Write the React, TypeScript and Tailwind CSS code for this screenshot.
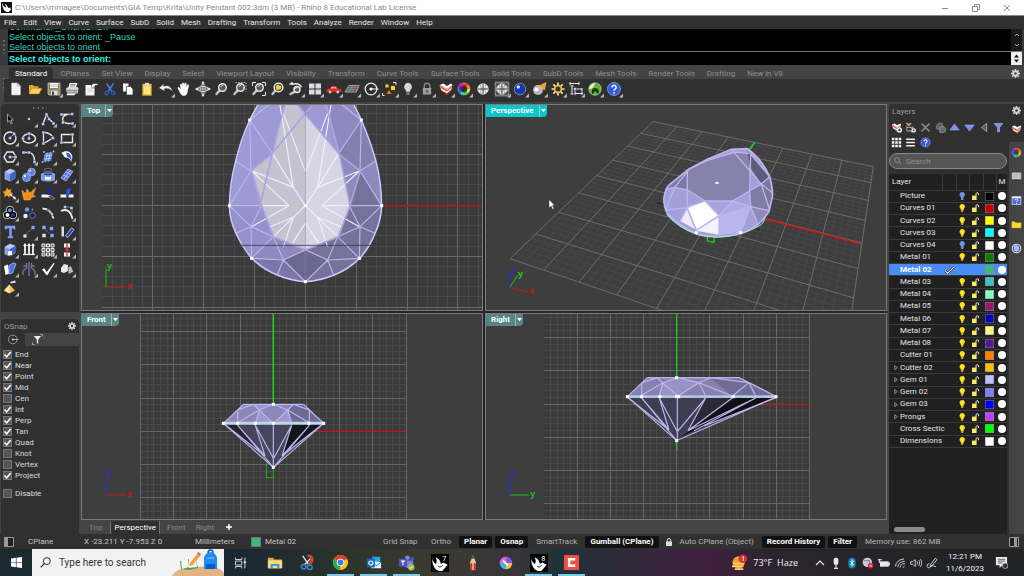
import React from "react";
import type { ReactNode } from "react";

type P = [number, number];

/* ---------- icon frame ---------- */

function Icon({ children, more = false, className = "size-[18px]" }: { children: ReactNode; more?: boolean; className?: string }) {
  return (
    <svg viewBox="0 0 18 18" className={`${className} block shrink-0`} fill="none" aria-hidden="true">
      {children}
      {more && <path d="M18 13.500v4h-4z" fill="#b4b4b4" />}
    </svg>
  );
}

const blue = "#7d9bf2";
const pale = "#ececec";

function Dot({ x, y, c = "#b9c8ff", r = 1.5 }: { x: number; y: number; c?: string; r?: number }) {
  return <rect x={x - r} y={y - r} width={r * 2} height={r * 2} fill={c} stroke="#222" strokeWidth=".4" />;
}

function Ball({ x, y, r, c }: { x: number; y: number; r: number; c: string }) {
  return (
    <>
      <circle cx={x} cy={y} r={r} fill={c} stroke="#d8d8d8" strokeWidth=".5" />
      <circle cx={x - r * 0.3} cy={y - r * 0.35} r={r * 0.3} fill="#fff" opacity=".85" />
    </>
  );
}

function Lens({ x = 9.5, y = 7.5, r = 3.8 }: { x?: number; y?: number; r?: number }) {
  return (
    <>
      <path d={`M${x - r * 0.7} ${y + r * 0.7}L3.5 14`} stroke="#c4c4c4" strokeWidth="2.4" strokeLinecap="round" />
      <circle cx={x} cy={y} r={r} fill="#5a5a5a" stroke={pale} strokeWidth="1.4" />
      <path d={`M${x - 1.6} ${y - 0.6}a2 2 0 0 1 2-1.4`} stroke="#fff" strokeWidth=".8" />
    </>
  );
}

function Wheel() {
  const colors = ["#f22", "#f80", "#fe0", "#3d2", "#0dc", "#16f", "#80f", "#f0a"];
  return (
    <>
      {colors.map((c, i) => {
        const a = (i * Math.PI) / 4 - Math.PI / 2;
        const b = a + Math.PI / 4 + 0.03;
        const r = 4.6;
        return (
          <path
            key={c}
            d={`M${9 + r * Math.cos(a)} ${9 + r * Math.sin(a)}A${r} ${r} 0 0 1 ${9 + r * Math.cos(b)} ${9 + r * Math.sin(b)}`}
            stroke={c}
            strokeWidth="2.6"
          />
        );
      })}
      <circle cx="9" cy="9" r="6" stroke="#ddd" strokeWidth=".5" />
    </>
  );
}

function LayerGlyph() {
  return (
    <>
      <path d="M2.500 5l4-1.500L10 6l4-2.500L15.500 5 10 9z" fill="#fff" />
      <path d="M2.500 5.500l2 5L10 14.500l4-4L15.500 5 10 9z" fill="#f4f4f4" />
      <path d="M2.700 5.500L10 9.700 15.300 5.500l-.6 2L10 11.500 3.700 8z" fill="#e8562f" />
      <path d="M4.500 10.300L10 13.200l4-3.700-.5 1.800L10 15l-5-3.500z" fill="#c9281a" />
    </>
  );
}

function Globe({ a = "#fff", b = "#b9b9b9" }: { a?: string; b?: string }) {
  return (
    <>
      <circle cx="9" cy="9" r="5.4" fill={a} stroke="#ddd" strokeWidth=".5" />
      <path d="M9 3.800v10.400M3.800 9h10.400" stroke={b} strokeWidth="1" />
      <path d="M6.200 4.500c1.200 2.500 1.200 6.500 0 9M11.800 4.500c-1.200 2.500-1.200 6.500 0 9" stroke={b} strokeWidth=".4" />
    </>
  );
}

function Help() {
  return (
    <>
      <circle cx="9" cy="9" r="6.400" fill="#3057dd" stroke="#9db2f5" strokeWidth=".8" />
      <path d="M6.900 7.400a2.100 2.100 0 1 1 3.200 1.800c-.8.5-1.100.8-1.100 1.600" stroke="#fff" strokeWidth="1.500" />
      <circle cx="9" cy="12.800" r=".9" fill="#fff" />
    </>
  );
}

function Gear({ className = "size-2" }: { className?: string }) {
  return (
    <svg viewBox="0 0 16 16" className={`${className} block shrink-0`} aria-hidden="true">
      <circle cx="8" cy="8" r="4" fill="none" stroke="#d4d4d4" strokeWidth="3.4" />
      <path d="M8 0v4M8 12v4M0 8h4M12 8h4M2.300 2.300l3 3M10.700 10.700l3 3M13.700 2.300l-3 3M5.300 10.700l-3 3" stroke="#d4d4d4" strokeWidth="2.6" />
    </svg>
  );
}

const sheet = <path d="M4.500 3h6l3 3v9h-9z" fill="#f4f4f4" stroke="#bbb" strokeWidth=".5" />;

/* ---------- toolbar across the top ---------- */

type Tool = { name: string; more?: boolean; art: ReactNode };

const mainTools: Tool[] = [
  { name: "New", art: <>{sheet}<path d="M10.500 3v3h3" fill="#cfcfcf" stroke="#999" strokeWidth=".5" /></> },
  { name: "Open", art: <><path d="M3 13.500V5h4l1 1.300h4.500V8" fill="#e8a520" /><path d="M3 14l2.500-5.800H16L13 14z" fill="#ffd25a" stroke="#a8720b" strokeWidth=".5" /></> },
  { name: "Save", more: true, art: <><path d="M3 3h12v12H4l-1-1z" fill="#8d8865" stroke="#d8d5b8" strokeWidth=".7" /><path d="M5 3h8v5H5z" fill="#fff" /><path d="M5 4.800h8M5 6.400h8" stroke="#888" strokeWidth=".5" /><path d="M6 10.500h6.500V15H6z" fill="#ddd" /><path d="M7 11.500h2V15H7z" fill="#444" /></> },
  { name: "Print", art: <><path d="M6.500 3h8l-2 5h-7z" fill="#fafafa" /><path d="M3 8.500l2-1.500h9.500l1 1.500-1 5H4z" fill="#d9d9d9" /><path d="M3.500 10.300h11M4 12.200h10M7.500 4.500h5M7 6h5" stroke="#555" strokeWidth=".7" /><path d="M4.500 13.500h8l-1 1.800h-8z" fill="#fff" /></> },
  { name: "Properties", art: <><path d="M3.500 5h9v10.500h-9z" fill="#f4f4f4" /><path d="M9 6l2-2.500h5V5l-3 .5-2 3z" fill="#fff" stroke="#333" strokeWidth=".6" /><path d="M5.500 9h5M5.500 11h5" stroke="#aaa" strokeWidth=".6" /></> },
  { name: "Cut", art: <><path d="M5.500 3.500L11 11.500M12.500 3.500L7 11.500" stroke="#4a7ce0" strokeWidth="1.4" /><circle cx="5.800" cy="13" r="1.700" stroke="#2c5ec0" strokeWidth="1.3" /><circle cx="12.200" cy="13" r="1.700" stroke="#2c5ec0" strokeWidth="1.3" /></> },
  { name: "Copy", art: <><path d="M4 3.500h5.500v8H4z" fill="#f4f4f4" /><path d="M7.500 6.500h4l2.500 2.500v6H7.500z" fill="#fff" stroke="#333" strokeWidth=".7" /></> },
  { name: "Paste", art: <><path d="M4.500 4h9v11.500h-9z" fill="#f2c94c" stroke="#b48a1e" strokeWidth=".5" /><path d="M6 6.500h6V14H6z" fill="#ffe38a" /><path d="M7 2.800h4v2.400H7z" fill="#ddd" /></> },
  { name: "Undo", more: true, art: <path d="M2 8l4.500-4v2.300c4-1.600 7.500-.3 9.500 5.200-3-3.200-6-3.700-9-2.500l1 2.200z" fill="#f2f2f2" stroke="#222" strokeWidth=".3" /> },
  { name: "Pan", art: <path d="M4.500 11L3 8.500c-.6-1 .5-1.500 1.200-.8L6 9.500 5.400 5c0-1.200 1.300-1.200 1.500 0L7.500 8V3.800c0-1.200 1.500-1.200 1.500 0V8l.7-4.200c.3-1 1.600-.9 1.500.2L10.900 8l1.300-2.800c.5-1 1.700-.6 1.400.5L12.400 11c-.3 3-1.200 4.500-3.500 4.500-2.400 0-3.400-1.800-4.400-4.500z" fill="#fff" stroke="#fff" strokeWidth=".6" /> },
  { name: "Rotate view", art: <><path d="M9 2.500v13M2 9h14" stroke={pale} strokeWidth=".8" /><ellipse cx="9" cy="9" rx="5.500" ry="2.400" stroke={pale} /><ellipse cx="9" cy="9" rx="2.300" ry="5" stroke="#bbb" /><path d="M9 1l1.800 2.600H7.200zM9 17l1.800-2.600H7.200zM1 9l2.600-1.800v3.600zM17 9l-2.600-1.800v3.600z" fill={pale} /></> },
  { name: "Zoom dynamic", art: <Lens /> },
  { name: "Zoom window", art: <><path d="M4.500 2.500h10.500v9" stroke="#bbb" strokeDasharray="1.500 1.200" /><Lens /></> },
  { name: "Zoom extents", art: <><Lens /><path d="M2.500 6V2.500H6M12 2.500h3.500V6M15.500 12v3.500H12" stroke={pale} /></> },
  { name: "Zoom selected", art: <><Lens r={4.4} /><path d="M9.500 5a2.600 2.600 0 1 0 0 5.200z" fill="#f7d619" /><circle cx="10.500" cy="7.600" r="1.800" fill="#f7d619" /></> },
  { name: "Undo view", more: true, art: <><path d="M2.500 4.500L5 2.800v1.500c4-1 8-.5 9.500 3" stroke={pale} strokeWidth="1.4" /><Lens x={10} y={9.5} r={3} /></> },
  { name: "Viewports", more: true, art: <path d="M3 3.500h5.500v5H3zM9.500 3.500H15v5H9.500zM3 9.500h5.500v5H3zM9.500 9.500H15v5H9.500z" fill="#d9dde3" /> },
  { name: "Car view", more: true, art: <><path d="M1.500 12V9.500l3-1L6.500 6h4.500l2 2.500 3.300.7V12z" fill="#e32626" /><path d="M6.800 7h2v1.600H5.800zM9.600 7h1l1.300 1.600H9.600z" fill="#fbb" /><circle cx="5" cy="12" r="1.400" fill="#ccc" /><circle cx="12.700" cy="12" r="1.400" fill="#ccc" /></> },
  { name: "CPlane", more: true, art: <><path d="M2 12l4-6.500h10L13.500 12z" fill="#565656" stroke="#bbb" strokeWidth=".8" /><path d="M3.500 9.800h11M4.800 7.700h10.600M6 12l3.500-6.500M9.500 12l3-6.500" stroke="#aaa" strokeWidth=".6" /><path d="M9 9l4-1" stroke="#e22" /><path d="M9 9V6" stroke="#2c4" /></> },
  { name: "Object snap", more: true, art: <><circle cx="9" cy="9" r="5.800" stroke={pale} strokeWidth="1.3" /><circle cx="9" cy="9" r="1.600" fill="#fff" /><path d="M9 9h7.500" stroke={pale} /></> },
  { name: "Select", more: true, art: <><path d="M12 2.500h3V5M3.500 15.500H1.500V13" stroke={pale} /><path d="M4.500 4.500h3v3h-3zM10 6h4v4h-4z" fill="#ffd60a" /><path d="M8 10l2.500 4h-5z" fill="#f08a24" stroke="#7a3c08" strokeWidth=".4" /></> },
  { name: "Visibility", more: true, art: <><path d="M9 2.800a4 4 0 0 1 2.500 7l-.7 2H7.200l-.7-2A4 4 0 0 1 9 2.800z" fill="#d5d5d5" /><path d="M7.500 12.400h3v2.400h-3z" fill="#8d8d8d" /><path d="M7.500 5.200a2 2 0 0 1 1.500-1" stroke="#fff" /></> },
  { name: "Lock", more: true, art: <><path d="M6.200 8V6a2.800 2.800 0 0 1 5.600 0v2" stroke="#888" strokeWidth="1.4" /><path d="M4.800 8h8.400v6.500H4.800z" fill="#9d9d9d" /><path d="M9 10v2.500" stroke="#333" strokeWidth="1.2" /></> },
  { name: "Layers", more: true, art: <LayerGlyph /> },
  { name: "Object properties", more: true, art: <Wheel /> },
  { name: "Shade", art: <Globe a="#f1f1f1" b="#3a3a3a" /> },
  { name: "Render preview", more: true, art: <><path d="M2.500 2.500h13v13h-13z" stroke="#ccc" strokeWidth="1.800" strokeDasharray="1 1" /><Globe a="#e4e4e4" b="#3a3a3a" /></> },
  { name: "Render", more: true, art: <Ball x={9} y={9} r={5.8} c="#1336b8" /> },
  { name: "Lights", more: true, art: <><circle cx="8" cy="10" r="5" fill="#b9b9b9" /><path d="M9 6L16 2.500l-1.500 7.500z" fill="#f39a2b" stroke="#ffd27a" strokeWidth=".5" /><circle cx="6.500" cy="9.500" r="2" fill="#fff" /></> },
  { name: "Options", more: true, art: <><circle cx="9" cy="9" r="3.400" stroke="#f5b93a" strokeWidth="1.800" /><path d="M9 2.500v2.400M9 13.100v2.400M2.500 9h2.400M13.100 9h2.400M4.400 4.400l1.700 1.700M11.900 11.900l1.700 1.700M13.600 4.400l-1.700 1.700M6.100 11.900l-1.700 1.700" stroke="#ffe7a3" strokeWidth="1.700" /></> },
  { name: "Dimension", more: true, art: <><path d="M3 3.500h9M3 2v3M12 2v3M5 6v8M3.500 6h3M3.500 14h3M8 9h7M8 13.500h8M8 8v7M15 8v7" stroke={pale} /><Dot x={8} y={9} /></> },
  { name: "Grasshopper", more: true, art: <><circle cx="9" cy="9" r="6.200" fill="#63b52f" stroke="#ddd" strokeWidth=".6" /><path d="M9 2.900A6 6 0 0 0 3.200 9c3 0 5-2 5.800-6.100z" fill="#dff0d0" /><path d="M9 8c-3 0-4 3-2.500 6.500L9 11l3 3c2-3 0-6-3-6z" fill="#17380a" /></> },
  { name: "Help", more: true, art: <Help /> },
];

/* ---------- palette on the left ---------- */

const cube = (
  <>
    <path d="M4 6l5-3 5 2v7l-5 3-5-2z" fill={blue} stroke="#dfe6ff" strokeWidth=".5" />
    <path d="M9 8l5-3v7l-5 3z" fill="#3c61d6" />
    <path d="M4 6l5-3 5 2-5 3z" fill="#b9c9ff" />
  </>
);

const sideTools: Tool[] = [
  { name: "Pointer", art: <path d="M6.500 4v8l2-1.500 1.500 3.500 1.300-.6L9.800 10h2.500z" fill="#0a0a0a" stroke="#ccc" strokeWidth=".7" /> },
  { name: "Point", more: true, art: <Dot x={9} y={9} r={1.2} /> },
  { name: "Polyline", more: true, art: <><path d="M4 14L7.500 4.500 10 9l5 4.500" stroke={pale} strokeWidth="1.4" /><Dot x={4} y={14} /><Dot x={7.5} y={4.5} /><Dot x={10} y={9} /><Dot x={14.5} y={13.5} /></> },
  { name: "Curve", more: true, art: <><path d="M3.500 4.500h6c-6 1-7 8 0 9h5" stroke={pale} strokeWidth="1.4" /><path d="M3.500 4.500l11-.5" stroke={pale} /><Dot x={3.5} y={4.5} /><Dot x={14} y={4} /><Dot x={5} y={12.5} /><Dot x={14.5} y={13.5} /></> },
  { name: "Circle", more: true, art: <><circle cx="9" cy="9" r="6" stroke={pale} strokeWidth="1.4" /><path d="M9 9l4.300-4.300" stroke={pale} strokeWidth=".8" /><Dot x={9} y={9} /><Dot x={13.3} y={4.7} /></> },
  { name: "Ellipse", more: true, art: <><ellipse cx="9" cy="9.500" rx="6.500" ry="4.500" stroke={pale} strokeWidth="1.4" /><path d="M9 9.500V5" stroke="#aaa" /><Dot x={9} y={9.5} /><Dot x={9} y={4.5} /><Dot x={3} y={9.5} /></> },
  { name: "Arc", more: true, art: <><path d="M4.500 3.500v11L14 9M4.500 3.500c5 0 8 2 9.500 5.500" stroke={pale} strokeWidth="1.3" /><Dot x={4.5} y={3.5} /><Dot x={4.5} y={14.5} /><Dot x={14} y={9} /></> },
  { name: "Rectangle", more: true, art: <><path d="M3.500 5.500h11v8h-11z" stroke={pale} strokeWidth="1.4" /><Dot x={3.5} y={13.5} /><Dot x={14.5} y={5.5} /></> },
  { name: "Polygon", more: true, art: <><path d="M6 4h6l3 5-3 5H6L3 9z" stroke={pale} strokeWidth="1.4" /><path d="M9 9h6" stroke={pale} /><Dot x={9} y={9} /><Dot x={14.5} y={9} /></> },
  { name: "Fillet curves", more: true, art: <><path d="M3 4.500h5c5 0 6.500 3 6.500 9.500" stroke={pale} strokeWidth="1.5" /><Dot x={3.5} y={4.5} /><Dot x={9} y={4.5} /><Dot x={14.5} y={14} /></> },
  { name: "Surface from points", more: true, art: <><path d="M6 5l8-1-2 9-8 1z" fill="#5d80e8" /><path d="M5.300 8l8-.8M4.700 11l8-.8M8.500 4.800l-2 9M11.300 4.400l-2 9" stroke="#cfdcff" strokeWidth=".7" /><Dot x={5} y={4} c="#ddd" r={1} /><Dot x={14.5} y={3.5} c="#ddd" r={1} /><Dot x={3.5} y={14} c="#ddd" r={1} /></> },
  { name: "Sweep", more: true, art: <><path d="M3.500 5c4-3.500 10-2 11 4l-1.500 5c-1-4-3.500-5-6-4.500z" fill="#fff" /><path d="M8 4.500c4 0 6.500 3 5 9-.5-3-2-4.500-4-4.500z" fill="#4166da" /></> },
  { name: "Box", more: true, art: cube },
  { name: "Spheres", more: true, art: <><circle cx="11.500" cy="6" r="3.800" fill="#5d80e8" stroke="#cfdcff" strokeWidth=".6" /><circle cx="6.500" cy="11.500" r="4" fill="#5d80e8" stroke="#cfdcff" strokeWidth=".6" /><circle cx="5" cy="10" r="1.200" fill="#dfe7ff" /><circle cx="10.300" cy="4.700" r="1" fill="#dfe7ff" /></> },
  { name: "Boolean", more: true, art: <><ellipse cx="9" cy="4" rx="4" ry="1.700" stroke="#777" strokeWidth=".8" /><path d="M2.500 8v6c3 1.500 10 1.500 13 0V8c-2-1.500-11-1.500-13 0z" fill={blue} stroke="#dfe6ff" strokeWidth=".5" /><path d="M6 10.500c1.500 1 4.500 1 6 0v3H6z" fill="#fff" /><ellipse cx="9" cy="8.300" rx="4" ry="1" fill="#29469f" /></> },
  { name: "Mesh", more: true, art: <><path d="M3 12l7-9 5 2.500-7 9.500z" fill="#4f75e6" stroke="#dfe6ff" strokeWidth=".6" /><path d="M5.500 13.500l7-9.300M5.500 9l5 2.500M8 6l5 2.500" stroke="#bccbff" strokeWidth=".8" /></> },
  { name: "Explode", more: true, art: <><path d="M6 2.500l1.500 2.500 3-1-.8 3 2.300 1.700-3 1-.5 3-2.300-2.200L3 12l.8-3.200-2.300-2 3-.8z" fill="#f6a524" /><path d="M8.500 8.500h2.300l.7 2.500 2.500.5 1.500 3-3-.5-1-2.500-2.500-.5z" fill="#fff" stroke="#555" strokeWidth=".4" /></> },
  { name: "Join", art: <path d="M2 5.500L6 8.500 7 4l3 4 5.500-5L13 10l2.500 1.500-4 1L10 15H4l-1-4z" fill="#f58b1f" stroke="#ffb04f" strokeWidth=".5" /> },
  { name: "Trim", art: <><path d="M2.500 9.500h8v3h-8z" fill="#f2f2f2" /><path d="M8.500 3l5-1-2 8h-3z" fill="#182e80" /><path d="M10.500 10l5 3-2 2-4-3.500z" stroke="#aaa" strokeWidth=".8" /></> },
  { name: "Split", art: <><path d="M2.500 9.500h6v3h-6zM10.500 9.500h5v3h-5z" fill="#f2f2f2" /><path d="M8.500 4l4.500-1-2 8h-3z" fill="#2a55d8" /></> },
  { name: "Group", more: true, art: <><circle cx="9" cy="6" r="3.900" fill="#e8e8e8" /><circle cx="6" cy="11" r="3.900" fill="#e8e8e8" /><circle cx="12" cy="11" r="3.900" fill="#e8e8e8" /><circle cx="9" cy="6" r="3.200" fill="#050505" /><circle cx="6" cy="11" r="3.200" fill="#050505" /><circle cx="12" cy="11" r="3.200" fill="#050505" /><circle cx="9" cy="6.300" r="2" fill="#6f90ee" /><circle cx="6.500" cy="11" r="2" fill="#fff" /><circle cx="11.800" cy="11" r="2" fill="#25368f" /></> },
  { name: "Ungroup", art: <><circle cx="7" cy="5.500" r="2.200" fill="#6f90ee" /><circle cx="5.500" cy="12" r="2.200" fill="#eee" /><circle cx="12.500" cy="11.500" r="2.800" fill="#0e1c77" stroke="#ccc" strokeWidth=".5" /><circle cx="12.500" cy="5.500" r="1" fill="#888" /></> },
  { name: "Edit points", art: <><path d="M3.500 4.500c6 0 9 3 11 10" stroke={pale} strokeWidth="1.8" /><Dot x={9.5} y={6.5} r={1.2} /><Dot x={13} y={10} r={1.2} /></> },
  { name: "Control points", more: true, art: <><path d="M3 7c6-3 10 1 11.500 8" stroke={pale} strokeWidth="1.800" /><path d="M7 3h7v6" stroke="#999" strokeWidth=".8" /><Dot x={7} y={3} /><Dot x={13.5} y={4} /></> },
  { name: "Text", art: <path d="M4 3h10v3.200h-1.200L12 5h-1.500v8.500H12V15H7v-1.500h1.500V5H6L5.200 6.200H4z" fill={blue} stroke={blue} strokeWidth=".6" /> },
  { name: "Move", more: true, art: <><path d="M5 12.500L12.500 5" stroke="#aaa" strokeDasharray="1.500 1" /><Dot x={13} y={4.5} r={1.9} c="#8aa4f4" /><Dot x={5} y={13} r={1.9} c="#ddd" /></> },
  { name: "Copy objects", art: <><path d="M5 5l8 8" stroke="#888" strokeDasharray="1.500 1" /><Dot x={5} y={4.5} r={2} c="#8aa4f4" /><Dot x={12.5} y={5.5} r={2} c="#8aa4f4" /><Dot x={13} y={12.5} r={2} c="#8aa4f4" /><Dot x={5} y={12.5} r={2} c="#ddd" /></> },
  { name: "Rotate", more: true, art: <><path d="M3.500 3.500H6v10H3.500z" fill="#ddd" /><path d="M7.500 13l6-8 2.500 1.500-6 8z" fill="#26449f" stroke="#9fb4f5" strokeWidth="1" /></> },
  { name: "Solid edit", more: true, art: <>{cube}<path d="M7 10h4v4H7z" fill="#fff" /></> },
  { name: "Align", more: true, art: <><path d="M3 13.500h12" stroke={pale} strokeWidth="1.300" /><path d="M5 4v9M9 4v9M13 4v9" stroke="#fff" strokeWidth="1.700" /><path d="M5 2l2 3H3zM9 2l2 3H7zM13 2l2 3h-4z" fill="#fff" /></> },
  { name: "Array", more: true, art: <path d="M3 3h3v3H3zM7.500 3h3v3h-3zM12 3h3v3h-3zM3 7.500h3v3H3zM7.500 7.500h3v3h-3zM12 7.500h3v3h-3zM3 12h3v3H3zM7.500 12h3v3h-3zM12 12h3v3h-3z" fill="#5e5e68" stroke="#f0f0f0" /> },
  { name: "Dimension", more: true, art: <><path d="M6 2.500h6v4H6zM6 11.500h6v4H6z" fill="#f2f2f2" /><path d="M9 3v12" stroke="#e03030" strokeWidth="1.400" /><path d="M7 8h4l-1.200 2H8.200z" fill="#e03030" /></> },
  { name: "Surfaces", more: true, art: <><path d="M3 6l4-1.500 1 9-3.500 1.500z" fill="#fff" /><path d="M8 5.500L12 3l3 1-3.500 9L8 14z" fill="#4870e4" stroke="#cfdcff" strokeWidth=".6" /></> },
  { name: "Mirror", more: true, art: <><path d="M9 2v14" stroke="#5d80e8" strokeWidth="1.300" /><path d="M6.500 3v5L3 11v4M11.500 3v5l3.500 3v4M7 6H3.500M11 6h3.500" stroke="#7d7d7d" strokeWidth="1.300" /></> },
  { name: "Check", more: true, art: <path d="M3 9.500l2.200-1.200L7.800 12 14.500 3l1 .6L8.500 15h-1z" fill="#fff" /> },
  { name: "Solids", more: true, art: <><path d="M3 8l3-4 4 1v6l-4 2-3-1z" fill="#e9e9e9" /><path d="M10 7l3-1 2.500 6-5 2z" fill="#bdbdbd" stroke="#444" strokeWidth=".5" /></> },
  { name: "Render tools", more: true, art: <><path d="M9 3l5-1.500 1 2-5 1z" fill="#ddd" /><path d="M8.500 5.500L14 11.500l-5.500 3-5.500-3z" fill="#f5c451" stroke="#8a5d10" strokeWidth=".5" /><path d="M8.500 5.500v9L3 11.500z" fill="#ffe7a1" /></> },
];

/* ---------- viewport drawings ---------- */

function range(from: number, to: number, step: number, anchor: number) {
  const out: number[] = [];
  const start = anchor + Math.ceil((from - anchor) / step) * step;
  for (let v = start; v <= to + 0.5; v += step) out.push(v);
  return out;
}

function FlatGrid({ x0, x1, y0, y1, ax, ay, pitch }: { x0: number; x1: number; y0: number; y1: number; ax: number; ay: number; pitch: number }) {
  const lines = (step: number) =>
    range(x0, x1, step, ax).map((x) => `M${x} ${y0}V${y1}`).join("") + range(y0, y1, step, ay).map((y) => `M${x0} ${y}H${x1}`).join("");
  return (
    <g strokeWidth="3" shapeRendering="crispEdges">
      <rect x={x0} y={y0} width={x1 - x0} height={y1 - y0} fill="#3b3b3b" />
      <path d={lines(pitch / 5)} stroke="#494949" />
      <path d={lines(pitch)} stroke="#676767" />
    </g>
  );
}

function AxisMark({ x, y, up, upColor, side, sideColor }: { x: number; y: number; up: string; upColor: string; side: string; sideColor: string }) {
  return (
    <g strokeWidth="3" className="font-['Open_Sans',sans-serif] text-[27px] font-bold">
      <path d={`M${x} ${y}v-58`} stroke={upColor} />
      <path d={`M${x} ${y}h58`} stroke={sideColor} />
      <text x={x + 3} y={y - 56} fill={upColor}>{up}</text>
      <text x={x + 62} y={y + 5} fill={sideColor}>{side}</text>
    </g>
  );
}

function Nodes({ at }: { at: P[] }) {
  return <>{at.map(([x, y]) => <rect key={`${x},${y}`} x={x - 4.5} y={y - 4.5} width="9" height="9" fill="#fff" />)}</>;
}

const edge = "#bcb6ee";

function TopScene() {
  const pear = "M150 -20Q127 15 104 60Q75 125 62 184Q45 245 43 317Q44 360 63 400Q82 442 110 475Q145 510 187 525Q228 543 271 545Q315 543 357 525Q400 510 434 475Q465 442 480 400Q499 360 500 317Q499 245 483 184Q467 125 439 60Q420 15 395 -20Z";
  const half = "M104 60L108 213M104 60L205 -20M104 60L172 160M108 213L62 184M108 213L43 317M43 317H140M43 317L108 380M108 380L63 400M108 380L110 475M108 380L140 317M110 475L175 410M110 475L205 480M205 480L175 410M205 480L187 525M205 480L271 545M205 480L271 450M108 380L175 410";
  const star = "M172 160L235 262M110 213L235 262L271 317M195 15L235 262M205 40L271 215M110 213L222 317M140 317H222M222 317L110 380M235 352L165 380M235 352L175 410M235 352L205 440M271 370L232 430M271 317L235 352";
  return (
    <>
      <FlatGrid x0={-339} x1={810} y0={0} y1={650} ax={271} ay={316} pitch={152.6} />
      <path d="M500 317H810" stroke="#a51d22" strokeWidth="5" />
      <path d={pear} fill="#8e8abf" />
      <path d="M150-20L104 60 62 184 43 317 140 317 172 160 213-20z" fill="#a19ddc" opacity=".8" />
      <path d="M43 317L63 400 110 475 175 410 140 317z" fill="#9591cc" />
      <path d="M500 317L480 400 434 475 370 410 405 317 436 213z" fill="#76739b" />
      <path d="M271 545L357 525 434 475 370 410 271 450z" fill="#76739b" />
      <path d="M271 545L205 480 271 450 340 480z" fill="#6b6991" />
      <path d="M271 545L187 525 110 475 205 480z" fill="#7a77a8" />
      <path d="M436 213L483 184 439 60 373 163z" fill="#8280ac" />
      <path d="M213 0L172 160 110 213 140 317 175 410 271 450 370 410 405 317 373 163 271 45 235 0z" fill="#c5c3d0" />
      <path d="M271 45L373 163 405 317 370 410 271 450z" fill="#d7d5e4" />
      <path d="M271 45L373 163 330 0 300 0z" fill="#9d99d4" />
      <g fill="none" strokeLinejoin="round">
        <g stroke="#f1effc" strokeWidth="3.5">
          <path d={star} />
          <path d={star} transform="translate(543 0) scale(-1 1)" />
        </g>
        <g stroke={edge} strokeWidth="3.5">
          <path d={half} />
          <path d={half} transform="translate(543 0) scale(-1 1)" />
          <path d="M300 5L172 160 108 213M240 5L373 163 436 213M140 317L175 410 271 450 370 410 405 317M172 160L135 317M373 163L405 317M213 0L172 160M330 0L373 163M110 213L140 317M436 213L405 317" stroke="#aaa5df" strokeWidth="5" />
          <path d={pear} stroke="#cdc9fa" strokeWidth="4.500" />
        </g>
        <path d="M43 436H498" stroke="#3b3b4a" strokeWidth="2.500" />
        <path d="M271 15V545" stroke="#8a87a4" strokeWidth="1.500" />
        <path d="M240 317H262" stroke="#8fdc8f" strokeWidth="3" />
      </g>
      <Nodes at={[[104, 60], [439, 60], [43, 317], [500, 317], [110, 475], [434, 475], [271, 545], [271, 317]]} />
      <AxisMark x={-327} y={562} up="y" upColor="#1fb51f" side="x" sideColor="#c01818" />
    </>
  );
}

/* Perspective mapping from the unit square to the ground plane's four corners. */
const ground = ((p0: P, p1: P, p2: P, p3: P) => {
  const sx = p0[0] - p1[0] + p2[0] - p3[0];
  const sy = p0[1] - p1[1] + p2[1] - p3[1];
  const dx1 = p1[0] - p2[0];
  const dy1 = p1[1] - p2[1];
  const dx2 = p3[0] - p2[0];
  const dy2 = p3[1] - p2[1];
  const den = dx1 * dy2 - dx2 * dy1;
  const g = (sx * dy2 - dx2 * sy) / den;
  const h = (dx1 * sy - sx * dy1) / den;
  return (u: number, v: number) => {
    const w = g * u + h * v + 1;
    const x = ((p1[0] - p0[0] + g * p1[0]) * u + (p3[0] - p0[0] + h * p3[0]) * v + p0[0]) / w;
    const y = ((p1[1] - p0[1] + g * p1[1]) * u + (p3[1] - p0[1] + h * p3[1]) * v + p0[1]) / w;
    return `${x.toFixed(1)} ${y.toFixed(1)}`;
  };
})([507, 65], [1168, 200], [1076, 815], [78, 476]);

function groundLines(count: number) {
  let d = "";
  for (let i = 0; i <= count; i++) {
    const t = i / count;
    d += `M${ground(t, 0)}L${ground(t, 1)}M${ground(0, t)}L${ground(1, t)}`;
  }
  return d;
}

function PerspectiveScene() {
  const outline = "M742 148L790 146Q835 178 857 230Q868 270 865 290L855 335Q840 358 820 375Q798 392 770 400Q735 410 700 410Q668 408 640 402Q612 392 590 375Q565 358 550 340Q538 318 540 292Q544 265 555 255L613 208 670 178Z";
  return (
    <>
      <path d={groundLines(40)} stroke="#4c4c4c" strokeWidth="2" />
      <path d={groundLines(8)} stroke="#737373" strokeWidth="2.500" />
      <path d="M795 150L812 127" stroke="#19d219" strokeWidth="5" />
      <path d="M843 357L1131 432" stroke="#d01414" strokeWidth="4" />
      <path d="M519 309l20 4M805 383l22 6" stroke="#151515" strokeWidth="3" />
      <path d="M670 408V423l20 4V408" stroke="#19d219" strokeWidth="4" fill="none" />
      <path d={outline} fill="#a39fd8" />
      <path d="M613 208L668 182 755 156 795 160 797 272 745 303 663 303 610 270z" fill="#8582ac" />
      <path d="M790 148L857 230 832 252 797 200z" fill="#5e5c7c" />
      <path d="M832 252L857 230 865 290 855 330z" fill="#79769f" />
      <path d="M797 272L832 252 855 330 800 320z" fill="#7f7ca8" />
      <path d="M545 265L613 208 610 270 572 262z" fill="#7d7aa6" />
      <path d="M800 320L855 332 822 372z" fill="#8e8ab8" />
      <path d="M745 303L800 320 705 347z" fill="#aeaae4" />
      <path d="M705 347L800 320 770 398 705 405z" fill="#b9b5ee" />
      <path d="M610 320L663 303 705 347 637 390z" fill="#fff" />
      <path d="M608 325L633 388 588 362z" fill="#ecebfb" />
      <path d="M705 350V404L637 392z" fill="#f4f3fd" />
      <path d="M663 303H745L705 347z" fill="#a7a3dd" />
      <path
        d="M613 208L668 182 755 156 795 160M742 148L832 252 745 303 705 347 663 303 610 270 572 262 545 268M790 146L800 162 797 272 800 320 855 332M800 162L857 230 832 252 865 278M832 252L857 330M745 303H663L610 323 637 390 705 347 800 320 770 398M800 320L822 372M705 347V405M610 208V323L545 330 572 262 615 208M610 323L588 365M745 303L800 320"
        stroke={edge}
        strokeWidth="4"
        fill="none"
      />
      <path d={outline} stroke={edge} strokeWidth="5" fill="none" />
      <path d="M548 342Q585 385 640 403T770 400 842 352" stroke="#9ddcd4" strokeWidth="3.500" fill="none" />
      <Nodes at={[[637, 398], [770, 398]]} />
      <path d="M693 251a6 6 0 0 1 12 0z" fill="#fff" />
      <g strokeWidth="3" className="font-['Open_Sans',sans-serif] text-[27px] font-bold">
        <path d="M77 562v-46" stroke="#2929e6" />
        <path d="M77 562l24-36" stroke="#1fc51f" />
        <path d="M77 562l54 14" stroke="#c01818" />
        <text x="80" y="519" fill="#2929e6">z</text>
        <text x="102" y="530" fill="#1fc51f">y</text>
        <text x="135" y="581" fill="#c01818">x</text>
      </g>
      <path d="M195 299v24l6-5 5 10 4-2-5-10h7z" fill="#fff" stroke="#222" strokeWidth="1" />
    </>
  );
}

function FrontScene() {
  const half = "M490 283L430 340M520 283L473 300M490 283L473 300 430 340M473 300V340M520 283L538 300 473 338M538 300L580 283M538 300L580 340M538 300L526 340M430 340L580 472M430 340L555 438M473 346L555 438M473 346L580 472M526 346L555 438M526 346L580 445";
  return (
    <>
      <FlatGrid x0={181} x1={979} y0={0} y1={640} ax={580} ay={364} pitch={99.6} />
      <path d="M580 0V283" stroke="#19e619" strokeWidth="4" />
      <path d="M712 364H979" stroke="#c81414" strokeWidth="4" />
      <path d="M559 460V503H580V472" stroke="#1fb51f" strokeWidth="3" fill="none" />
      <path d="M490 283H670L733 340H430z" fill="#8b88b8" />
      <path d="M538 300L580 340H526zM625 300L580 340H636zM520 283H580L538 300z" fill="#9d99cf" />
      <path d="M670 283L733 340H636L625 300 640 283z" fill="#6d6a91" />
      <path d="M430 340H733L580 472z" fill="#47455c" />
      <path d="M636 342H726L605 440z" fill="#15151d" />
      <path d="M430 340L555 438 473 344z" fill="#26252f" />
      <g fill="none" stroke={edge} strokeWidth="3.500">
        <path d={half} />
        <path d={half} transform="translate(1161 0) scale(-1 1)" />
        <path d="M490 283H670M580 346V472" />
        <path d="M430 340H733" stroke="#b9d8e8" strokeWidth="9" />
      </g>
      <Nodes at={[[580, 283], [430, 340], [473, 340], [526, 340], [580, 340], [687, 340], [731, 340], [580, 472]]} />
      <AxisMark x={78} y={555} up="z" upColor="#2929e6" side="x" sideColor="#c01818" />
    </>
  );
}

function RightScene() {
  return (
    <>
      <FlatGrid x0={181} x1={977} y0={0} y1={640} ax={578} ay={282} pitch={99.6} />
      <path d="M578 0V200M578 390V422" stroke="#19d219" strokeWidth="4" />
      <path d="M838 283H977" stroke="#b81a1a" strokeWidth="4" />
      <path d="M490 203H765L878 260H430z" fill="#8582b0" />
      <path d="M536 219L580 258H526zM580 203L645 218 582 256 538 219z" fill="#9693c6" />
      <path d="M765 203L878 260H745L680 203z" fill="#716e95" />
      <path d="M430 260H878L578 392z" fill="#3f3d52" />
      <path d="M745 264H872L612 370 592 380z" fill="#101015" />
      <path d="M665 264H745L615 362z" fill="#2a2935" />
      <g fill="none" stroke={edge} strokeWidth="3.500">
        <path d="M490 203H765L878 260L578 392L430 260L490 203L473 219V258M520 203L473 219M520 203L536 219 473 256M536 219L580 203 645 218 680 203 795 218 765 203M536 219L526 258M536 219L582 258 645 218 745 258 795 218 878 260M645 218L665 258M795 218L815 258" />
        <path d="M430 262L555 360M473 264L578 392M473 264L555 360M526 264L555 360M526 264L580 365M580 264V392M665 264L580 365M665 264L612 362 745 264M612 362L815 264 630 362M660 348L878 262" />
        <path d="M430 260H878" strokeWidth="8" />
        <path d="M440 260H870" stroke="#9adccb" strokeWidth="4" strokeDasharray="50 18" />
      </g>
      <Nodes at={[[578, 203], [430, 260], [473, 260], [528, 260], [578, 260], [584, 260], [748, 260], [876, 260], [578, 392]]} />
      <AxisMark x={77} y={555} up="z" upColor="#2929e6" side="y" sideColor="#1fb51f" />
    </>
  );
}

function Viewport({ title, view, active = false, children }: { title: string; view: string; active?: boolean; children: ReactNode }) {
  return (
    <section aria-label={title} className="relative min-h-[207px] min-w-0 overflow-hidden border border-[#7b7b7f] bg-[#3e3e3e]">
      <svg viewBox={view} preserveAspectRatio="xMidYMid slice" className="absolute inset-0 size-full" fill="none" aria-hidden="true">
        {children}
      </svg>
      <button
        type="button"
        className={`absolute top-0 left-0 flex h-3 items-center rounded-br-sm font-['Roboto',sans-serif] text-[8px] leading-3 font-bold text-white ${active ? "bg-[#0cc7ca]" : "bg-[#568585]"}`}
      >
        <span className="px-[5px]">{title}</span>
        <span className="flex h-full w-2 items-center justify-center border-l border-white/40">
          <svg viewBox="0 0 6 4" className="w-[5px]" aria-hidden="true"><path d="M0 0h6L3 4z" fill="#fff" /></svg>
        </span>
      </button>
    </section>
  );
}

/* ---------- layers ---------- */

type Layer = { name: string; color: string; off?: boolean; child?: boolean; current?: boolean };

const layers: Layer[] = [
  { name: "Picture", color: "#000000", off: true },
  { name: "Curves 01", color: "#c40000" },
  { name: "Curves 02", color: "#ffff00" },
  { name: "Curves 03", color: "#00ffff" },
  { name: "Curves 04", color: "#ffffff", off: true },
  { name: "Metal 01", color: "#008000" },
  { name: "Metal 02", color: "#3cb878", current: true },
  { name: "Metal 03", color: "#40c0c0" },
  { name: "Metal 04", color: "#7fffbf" },
  { name: "Metal 05", color: "#961a6a" },
  { name: "Metal 06", color: "#0000bf" },
  { name: "Metal 07", color: "#fff47f" },
  { name: "Metal 08", color: "#551a96" },
  { name: "Cutter 01", color: "#ff7f00" },
  { name: "Cutter 02", color: "#ffbf00", child: true },
  { name: "Gem 01", color: "#bfbfff", child: true },
  { name: "Gem 02", color: "#7f7fff", child: true },
  { name: "Gem 03", color: "#0000ff", child: true },
  { name: "Prongs", color: "#bf3fff", child: true },
  { name: "Cross Sectic", color: "#00ff00" },
  { name: "Dimensions", color: "#ffffff" },
];

function LayerRow({ layer }: { layer: Layer }) {
  const line = "border-b border-[#3a3a3a] p-0";
  return (
    <tr className={layer.current ? "bg-[#4a8cf7] font-bold text-white" : "text-[#e4e4e4]"}>
      <td className={`${line} whitespace-nowrap`}>
        <span className="flex items-center">
          <span className="flex w-[11px] shrink-0 justify-end pr-[2px]">
            {layer.child && <svg viewBox="0 0 6 8" className="w-1" aria-hidden="true"><path d="M1 1l4 3-4 3z" fill="none" stroke="#bbb" /></svg>}
          </span>
          {layer.name}
        </span>
      </td>
      <td className={line}>
        {layer.current && <svg viewBox="0 0 12 9" className="mx-auto w-[11px]" aria-label="Current"><path d="M1 5l3 3 7-7" fill="none" stroke="#222" strokeWidth="2.600" /><path d="M1 5l3 3 7-7" fill="none" stroke="#fff" strokeWidth="1.200" /></svg>}
      </td>
      <td className={line}>
        {!layer.current && (
          <svg viewBox="0 0 8 10" className="mx-auto h-2" aria-hidden="true">
            <path d="M4 0a3.200 3.200 0 0 1 2 5.800L5.500 8h-3L2 5.800A3.200 3.200 0 0 1 4 0z" fill={layer.off ? "#6d96e6" : "#ffe11f"} />
            <path d="M2.700 8h2.600v1.800H2.700z" fill={layer.off ? "#9fb6e6" : "#d8c24a"} />
          </svg>
        )}
      </td>
      <td className={line}>
        {!layer.current && (
          <svg viewBox="0 0 9 10" className="mx-auto h-2" aria-hidden="true">
            <path d="M0 4.500h5.800V10H0z" fill="#ffe95c" />
            <path d="M5 5V2.500a1.600 1.600 0 0 1 3.200 0V4" fill="none" stroke="#f2ead0" strokeWidth="1.200" />
          </svg>
        )}
      </td>
      <td className={line}>
        <svg viewBox="0 0 9 9" className="mx-auto size-[9px]" aria-label={layer.color}>
          <path d="M0 0h9v9H0z" fill="#8a8a8a" />
          <path d="M.5.5h8v8h-8z" fill={layer.color} />
        </svg>
      </td>
      <td className={line}>
        <svg viewBox="0 0 8 8" className="mx-auto size-2" aria-hidden="true"><circle cx="4" cy="4" r="4" fill="#fff" /></svg>
      </td>
    </tr>
  );
}

const layerActions: Tool[] = [
  { name: "New layer", art: <><LayerGlyph /><circle cx="13" cy="12.500" r="3.600" fill="#fff" /><path d="M13 10.500v4M11 12.500h4" stroke="#222" strokeWidth="1.200" /></> },
  { name: "New sublayer", art: <><path d="M3 3l4 1 3-1-3 4z" fill="#e8562f" stroke="#fff" strokeWidth=".6" /><path d="M4 6v8h4M4 9h4" stroke="#ccc" /><path d="M8 8l3 1 2-1-2 3zM8 13l3 .5 2-1-2 3z" fill="#e8562f" stroke="#fff" strokeWidth=".6" /><circle cx="13.500" cy="13" r="3" fill="#fff" /><path d="M13.500 11.500v3M12 13h3" stroke="#222" /></> },
  { name: "Delete", art: <path d="M3.500 3.500l11 11M14.500 3.500l-11 11" stroke="#8c8c8c" strokeWidth="2.200" /> },
  { name: "Duplicate", art: <><path d="M3 7l3-4h5l1 3v4l-4 2-4-1z" fill="#5c5c5c" stroke="#8f8f8f" /><path d="M8 8h6l2 2v4l-3 2H8z" fill="#6a6a6a" stroke="#9a9a9a" /></> },
  { name: "Move up", art: <path d="M9 4l6.500 8.500h-13z" fill="#7590f4" stroke="#b9c6ff" strokeWidth=".6" /> },
  { name: "Move down", art: <path d="M9 14L2.500 5.500h13z" fill="#7590f4" stroke="#b9c6ff" strokeWidth=".6" /> },
  { name: "Move out", art: <path d="M12 3.500v11L5 9z" fill="#555" stroke="#c8c8c8" /> },
  { name: "Filter", art: <path d="M3 3.500h12L10.500 9v6h-3V9z" fill="#7590f4" stroke="#c9d3ff" strokeWidth=".6" /> },
  { name: "Columns", art: <path d="M2.500 2.500H6V6H2.500zM7.200 2.500h3.600V6H7.200zM12 2.500h3.500V6H12zM2.500 7.200H6v3.600H2.500zM7.200 7.200h3.600v3.600H7.200zM12 7.200h3.500v3.600H12zM2.500 12H6v3.500H2.500zM7.200 12h3.600v3.500H7.200zM12 12h3.500v3.500H12z" fill="#f2f2f2" /> },
  { name: "List menu", art: <path d="M3 4.500h12M3 9h12M3 13.500h12" stroke="#f2f2f2" strokeWidth="1.800" /> },
  { name: "Panel help", art: <Help /> },
];

const panelTabs: Tool[] = [
  { name: "Layers panel", art: <LayerGlyph /> },
  { name: "Color panel", art: <Wheel /> },
  { name: "Display panel", art: <><path d="M3 4h12v8.500H3z" fill="#bdbdbd" stroke="#eee" strokeWidth=".7" /><path d="M6 14.500h6" stroke="#333" strokeWidth="1.500" /></> },
  { name: "Help panel", art: <><path d="M3 3.500h12v11H3z" fill="#4a6bd8" stroke="#dfe5ff" /><path d="M3 5h12" stroke="#fff" strokeWidth="1.600" /><path d="M7.300 8.600a1.700 1.700 0 1 1 2.500 1.400c-.6.4-.8.6-.8 1.200" stroke="#fff" strokeWidth="1.300" /><circle cx="9" cy="12.800" r=".8" fill="#fff" /></> },
  { name: "Libraries panel", art: <path d="M2.500 5h4l1.500 1.500h7.500V14h-13z" fill="#ffd633" stroke="#b58d10" strokeWidth=".5" /> },
  { name: "Web panel", art: <><circle cx="9" cy="9" r="6" fill="#3d5fb5" stroke="#dcdcdc" strokeWidth="1.400" /><path d="M6 6l3-1 3 2v4l-3 2-3-2z" fill="#9db4ee" stroke="#fff" strokeWidth=".7" /></> },
];

/* ---------- taskbar ---------- */

function RhinoLogo({ n }: { n: string }) {
  return (
    <svg viewBox="0 0 20 20" className="size-[18px] overflow-visible" aria-hidden="true">
      <path d="M0 0h20v20H0z" fill="#050505" />
      <path d="M1.500 1.500C1 6 2 9.500 5.500 11 7 8.500 6.500 6 5 3.500 9 5 10.500 8 11 11l2.500-1.500L18.500 12 16 15l-3.500 4H9C3.500 17.500.5 11 1.500 1.500z" fill="#fff" />
      <path d="M8 13.500c1.500 1.500 3.500 1 5-1" fill="none" stroke="#050505" />
      <text x="12.500" y="8" fill="#fff" className="font-['Roboto',sans-serif] text-[8px]">{n}</text>
    </svg>
  );
}

const pinned: { name: string; open?: boolean; art: ReactNode }[] = [
  { name: "Task view", art: <svg viewBox="0 0 18 18" className="size-3.5" fill="none" stroke="#ddd" aria-hidden="true"><path d="M2 2v2.500h8V2M2 6.500h8v5H2zM2 16v-2.500h8V16M14 2v14" strokeWidth="1.200" /><path d="M13 7h2v2h-2z" fill="#ddd" /></svg> },
  { name: "File Explorer", art: <svg viewBox="0 0 18 18" className="size-4" aria-hidden="true"><path d="M1 3h6l1 2h9v10H1z" fill="#e8a33a" /><path d="M1 6h16v9H1z" fill="#ffd976" /><path d="M4 10h10v5h-2.500v-2.500h-5V15H4z" fill="#3f9be0" /></svg> },
  { name: "Snip", art: <svg viewBox="0 0 18 18" className="size-[17px]" fill="none" aria-hidden="true"><path d="M4 2l6 9M12 5l-6 6" stroke="#d8dde2" strokeWidth="1.500" /><path d="M9 2c6-1 7 7 1 8" stroke="#d9412b" strokeWidth="3" /><circle cx="5" cy="13.500" r="2.400" stroke="#3389d6" strokeWidth="1.600" /><circle cx="11.500" cy="14" r="2.400" stroke="#3389d6" strokeWidth="1.600" /></svg> },
  { name: "Chrome", open: true, art: <svg viewBox="0 0 18 18" className="size-[17px]" aria-hidden="true"><circle cx="9" cy="9" r="8" fill="#fbc116" /><path d="M9 9L2.100 5A8 8 0 0 1 16 5z" fill="#e33b2e" /><path d="M9 9L2.100 5A8 8 0 0 0 8.500 17z" fill="#2da94f" /><circle cx="9" cy="9" r="4" fill="#fff" /><circle cx="9" cy="9" r="3.100" fill="#3b7ded" /></svg> },
  { name: "Outlook", open: true, art: <svg viewBox="0 0 18 18" className="size-4" aria-hidden="true"><path d="M7 2h9v8H7z" fill="#28a8ea" /><path d="M6 7l11 1v7H6z" fill="#e8f3fb" /><path d="M6 8l6 4 5-4" fill="none" stroke="#0f78d4" /><path d="M1 4h9v10H1z" fill="#0f6cbd" /><circle cx="5.500" cy="9" r="2.300" fill="none" stroke="#fff" strokeWidth="1.300" /></svg> },
  { name: "Teams", open: true, art: <svg viewBox="0 0 18 18" className="size-[17px]" aria-hidden="true"><circle cx="10" cy="4" r="2.500" fill="#7b83eb" /><circle cx="15" cy="5" r="1.700" fill="#5059c9" /><path d="M7 7h9v5c0 4-9 4-9 0z" fill="#7b83eb" /><path d="M1 5h8.500v8.500H1z" fill="#4b53bc" /><path d="M3 7.500h4.500M5.200 7.500V12" stroke="#fff" strokeWidth="1.200" /><circle cx="14" cy="14" r="3.400" fill="#92c353" /><path d="M12.400 14l1.200 1.200 2-2.200" fill="none" stroke="#fff" /></svg> },
  { name: "Rhino 7", art: <RhinoLogo n="7" /> },
  { name: "Pencil", art: <svg viewBox="0 0 18 18" className="size-4" aria-hidden="true"><path d="M9 0l3.500 9-1 8h-5l-1-8z" fill="#e9c9a0" /><path d="M9 0l1.300 4H7.700z" fill="#333" /><path d="M5.500 10l1.500-1 2 1 2-1 1.500 1-1 7.500h-5z" fill="#c03a2b" /><path d="M8 10h2v7H8z" fill="#f0a79a" /></svg> },
  { name: "Krita", art: <svg viewBox="0 0 18 18" className="size-4" aria-hidden="true"><circle cx="9" cy="9" r="7" fill="#7a5be8" /><path d="M9 2a7 7 0 0 0-7 7l7 0z" fill="#f25ad0" /><path d="M2 9a7 7 0 0 0 7 7V9z" fill="#3bb8f0" /><path d="M9 16a7 7 0 0 0 7-7H9z" fill="#f5c33c" /><path d="M6 5l6 6-2 1-5-5z" fill="#fff" /></svg> },
  { name: "Rhino 8", open: true, art: <RhinoLogo n="8" /> },
  { name: "Camtasia", open: true, art: <svg viewBox="0 0 18 18" className="size-[17px]" aria-hidden="true"><rect x="1" y="1" width="16" height="16" rx="1" fill="#f04f45" /><path d="M13 5.500H6.500v7H13" fill="none" stroke="#fff" strokeWidth="2.600" /></svg> },
];

const tray: { name: string; art: ReactNode }[] = [
  { name: "Show hidden icons", art: <path d="M3 12l6-6 6 6" stroke="#eee" strokeWidth="1.600" /> },
  { name: "Microphone", art: <><rect x="5.500" y="1" width="7" height="11" rx="3" fill="#e8e8e8" /><path d="M9 11v6M6 17h6" stroke="#e8e8e8" strokeWidth="1.800" /></> },
  { name: "Bluetooth", art: <><rect x="3.500" y="1" width="11" height="16" rx="5.500" fill="#1585b8" /><path d="M6.500 6l5 5.500L9 14V4l2.500 2.500-5 5.500" stroke="#fff" strokeWidth="1.200" /></> },
  { name: "Network status", art: <><circle cx="8" cy="8" r="7" fill="#c9cbd0" /><path d="M3 5c3 2 6-2 8 1s-3 4-1 8" stroke="#7c8088" strokeWidth="1.600" /><circle cx="13" cy="13" r="4" fill="#e0243c" /><path d="M11.500 11.500l3 3M14.500 11.500l-3 3" stroke="#fff" strokeWidth="1.200" /></> },
  { name: "Battery", art: <><path d="M3 6.500h13v8H3z" fill="#e8e8e8" /><path d="M16 9h2v3h-2zM2 3v6M0 4h6" stroke="#e8e8e8" strokeWidth="1.600" /></> },
  { name: "Wi-Fi", art: <path d="M2 14A13 13 0 0 1 15 3M5.500 15A10 10 0 0 1 16 6.500M9 15.500A7 7 0 0 1 16.500 10M13 16l3-2.500" stroke="#e8e8e8" strokeWidth="1.300" /> },
  { name: "Volume", art: <path d="M1 7h3l4-3v10l-4-3H1zM10.500 6.500c1 1.500 1 3.500 0 5M13 4.500c2 3 2 6 0 9M15.500 3c3 4 3 8 0 12" stroke="#e8e8e8" strokeWidth="1.200" /> },
  { name: "Pen", art: <path d="M7 11l7-9 2.500 2-7 9-3.500 1zM5 10c-5 0-4 7 0 6 3-1 2-4 5-3 2 .5 3 2 5 1" stroke="#e8e8e8" strokeWidth="1.300" /> },
];

/* ---------- page ---------- */

const menus = ["File", "Edit", "View", "Curve", "Surface", "SubD", "Solid", "Mesh", "Drafting", "Transform", "Tools", "Analyze", "Render", "Window", "Help"];
const tabs = ["Standard", "CPlanes", "Set View", "Display", "Select", "Viewport Layout", "Visibility", "Transform", "Curve Tools", "Surface Tools", "Solid Tools", "SubD Tools", "Mesh Tools", "Render Tools", "Drafting", "New in V8"];
const snaps: [string, boolean][] = [["End", true], ["Near", true], ["Point", true], ["Mid", true], ["Cen", false], ["Int", true], ["Perp", true], ["Tan", true], ["Quad", true], ["Knot", false], ["Vertex", false], ["Project", true]];

function Snap({ name, on }: { name: string; on: boolean }) {
  return (
    <label className="flex flex-1 items-center gap-[3px]">
      <span className="relative size-[9px]">
        <input type="checkbox" defaultChecked={on} className="peer block size-[9px] appearance-none border border-[#777] bg-[#555]" />
        <svg viewBox="0 0 9 9" className="pointer-events-none absolute inset-0 hidden size-[9px] peer-checked:block" aria-hidden="true">
          <path d="M1.500 4.500l2.200 2.300L7.700 2" fill="none" stroke="#fff" strokeWidth="1.500" />
        </svg>
      </span>
      {name}
    </label>
  );
}

function Grip({ vertical = false }: { vertical?: boolean }) {
  return vertical ? (
    <svg viewBox="0 0 4 16" className="h-4 w-1 shrink-0" aria-hidden="true"><path d="M2 1v14" stroke="#858585" strokeWidth="1.500" strokeDasharray="1.500 3" /></svg>
  ) : (
    <svg viewBox="0 0 16 3" className="h-1 w-4" aria-hidden="true"><path d="M1 1.500h14" stroke="#858585" strokeWidth="1.500" strokeDasharray="1.500 3" /></svg>
  );
}

function StatusToggle({ children, on = false }: { children: ReactNode; on?: boolean }) {
  return (
    <button type="button" className={`h-3 rounded-xs px-[5px] whitespace-nowrap ${on ? "bg-[#111111] font-bold text-white" : "text-[#b4b4b4]"}`}>
      {children}
    </button>
  );
}

export default function App() {
  return (
    <div className="flex min-h-screen w-full flex-col bg-[#444444] font-['Roboto','Noto_Sans',sans-serif] text-[8px] leading-[11px] text-[#dddddd]">
      <header>
        <div className="flex h-4 items-center justify-between border-b border-[#888] bg-white pl-px text-[#8b8b8b]">
          <div className="flex items-center gap-[3px]">
            <svg viewBox="0 0 20 20" className="size-[11px]" aria-hidden="true"><path d="M0 0h20v20H0z" fill="#111" /><path d="M2 1c1 5 3 8 7 9 0-3-1-5-2-7 4 2 5 5 6 8l4-1 1 4-4 4c-7 2-12-6-12-17z" fill="#fff" /></svg>
            <h1>C:\Users\mmagee\Documents\GIA Temp\Krita\Unity Pendant 002.3dm (3 MB) - Rhino 8 Educational Lab License</h1>
          </div>
          <div className="flex items-center gap-[23px] pr-[13px]">
            <button type="button" aria-label="Minimize"><svg viewBox="0 0 8 8" className="size-2" fill="none" stroke="#8b8b8b"><path d="M1 4.500h6" /></svg></button>
            <button type="button" aria-label="Restore"><svg viewBox="0 0 8 8" className="size-2" fill="none" stroke="#8b8b8b"><path d="M.5 2.500h5v5h-5zM2.500 2.500v-2h5v5h-2" /></svg></button>
            <button type="button" aria-label="Close"><svg viewBox="0 0 8 8" className="size-2" fill="none" stroke="#8b8b8b"><path d="M1 1l6 6M7 1l-6 6" /></svg></button>
          </div>
        </div>

        <nav aria-label="Main menu" className="flex h-[13px] items-center gap-[7px] bg-[#303030] pl-1 text-[#e8e8e8]">
          {menus.map((m) => <button key={m} type="button" className="leading-[9px]">{m}</button>)}
        </nav>

        <div className="flex bg-[#3a3a3a] font-['Liberation_Sans',Arial,sans-serif] text-[9px] leading-[10px] text-[#2fd0bd]">
          <div className="flex w-2 items-center justify-center"><Grip vertical /></div>
          <div className="min-w-0 flex-1 bg-black">
            <div className="flex h-[23px] justify-between border-b border-[#777]">
              <div className="flex flex-col justify-end overflow-hidden pl-px">
                <p className="whitespace-nowrap">Command: _OrientOnSrf</p>
                <p className="whitespace-nowrap">Select objects to orient: _Pause</p>
                <p className="-mb-px whitespace-nowrap">Select objects to orient</p>
              </div>
              <div className="flex w-[11px] flex-col items-center justify-between bg-[#1a1a1a] py-1">
                <svg viewBox="0 0 6 4" className="w-[6px]" fill="none" stroke="#aaa" aria-hidden="true"><path d="M1 3l2-2 2 2" /></svg>
                <svg viewBox="0 0 6 4" className="w-[6px]" fill="none" stroke="#aaa" aria-hidden="true"><path d="M1 1l2 2 2-2" /></svg>
              </div>
            </div>
            <div className="flex h-[13px] items-center pl-px font-bold text-[#35f0ea]">
              <label htmlFor="command" className="whitespace-nowrap">Select objects to orient:</label>
              <input id="command" className="h-full min-w-0 flex-1 bg-transparent outline-none" />
              <svg viewBox="0 0 11 13" className="h-[13px] w-[11px]" aria-hidden="true"><path d="M0 0h11v13H0z" fill="#eee" /><path d="M5.500 2.500l2.500 3H3zM5.500 10.500l2.500-3H3z" fill="#111" /></svg>
            </div>
          </div>
          <div className="w-[2px]" />
        </div>

        <div className="mt-[2px] flex bg-[#444444]">
          <div className="flex w-2 items-center justify-center"><Grip vertical /></div>
          <div className="min-w-0 flex-1">
            <div className="flex items-center justify-between pr-1">
              <div role="tablist" aria-label="Toolbars" className="flex pl-px text-[#8f8f8f]">
                {tabs.map((t, i) => (
                  <button key={t} type="button" role="tab" aria-selected={i === 0} className={`h-3 px-[6px] whitespace-nowrap ${i === 0 ? "mr-px rounded-t-sm bg-[#303030] text-white" : ""}`}>{t}</button>
                ))}
              </div>
              <button type="button" aria-label="Toolbar options"><Gear className="size-[9px]" /></button>
            </div>
            <div className="-ml-1 flex h-[23px] items-start bg-[#303030] pt-px pl-[3px]">
              <div className="flex w-[616px]">
                {mainTools.map((t) => (
                  <button key={t.name} type="button" aria-label={t.name} title={t.name} className="flex min-w-0 flex-1 justify-center"><Icon more={t.more}>{t.art}</Icon></button>
                ))}
              </div>
            </div>
          </div>
        </div>
      </header>

      <div className="mt-[2px] flex flex-1">
        <aside className="flex w-[81px] shrink-0 flex-col gap-1 pr-[2px] pl-px">
          <div className="flex flex-col items-center rounded-t-sm bg-[#303030] pt-[2px] pb-[15px]">
            <Grip />
            <div className="grid h-[187px] w-[75px] grid-cols-4 grid-rows-10 self-start">
              {sideTools.map((t, i) => (
                <button key={`${t.name}${i}`} type="button" aria-label={t.name} title={t.name} className="flex items-center justify-center"><Icon more={t.more}>{t.art}</Icon></button>
              ))}
            </div>
          </div>
          <div className="mt-[3px] flex flex-1 flex-col rounded-t-sm bg-[#303030]">
            <div className="flex h-[14px] items-center justify-between px-[3px] text-[#9a9a9a]">
              <h2>OSnap</h2>
              <button type="button" aria-label="OSnap options"><Gear /></button>
            </div>
            <div className="flex h-[13px] bg-[#444444]">
              <button type="button" aria-label="Snaps" className="flex w-6 items-center justify-center bg-[#303030]"><Icon className="size-[13px]"><circle cx="8" cy="9" r="6" stroke="#bbb" /><circle cx="8" cy="9" r="1.500" fill="#ddd" /><path d="M8 9h8" stroke="#ccc" /></Icon></button>
              <button type="button" aria-label="Filters" className="flex w-6 items-center justify-center"><Icon className="size-[13px]"><path d="M4 4h10l-4 5v6l-2-1V9z" fill="#eee" /><path d="M13 2h3v3M2 13v3h3" stroke="#ccc" /></Icon></button>
            </div>
            <div className="mt-[3px] flex h-[150px] flex-col pl-[2px]">
              {snaps.map(([name, on]) => <Snap key={name} name={name} on={on} />)}
              <div className="flex-1" />
              <Snap name="Disable" on={false} />
            </div>
          </div>
        </aside>

        <main className="flex min-w-0 flex-1 flex-col">
          <div className="grid flex-1 grid-cols-2 grid-rows-2 gap-[2px] bg-[#262626]">
            <Viewport title="Top" view="-399 15 1200 615"><TopScene /></Viewport>
            <Viewport title="Perspective" view="6 15 1200 615" active><PerspectiveScene /></Viewport>
            <Viewport title="Front" view="6 12 1200 615"><FrontScene /></Viewport>
            <Viewport title="Right" view="6 12 1200 615"><RightScene /></Viewport>
          </div>
          <div role="tablist" aria-label="Viewports" className="flex h-[14px] items-center text-[#8a8a8a]">
            <button type="button" role="tab" aria-selected="false" className="px-2">Top</button>
            <button type="button" role="tab" aria-selected="true" className="h-[13px] border-x border-[#777] bg-[#303030] px-[3px] text-white">Perspective</button>
            <button type="button" role="tab" aria-selected="false" className="pl-[7px]">Front</button>
            <button type="button" role="tab" aria-selected="false" className="pl-[10px]">Right</button>
            <button type="button" aria-label="Add viewport" className="pl-3"><svg viewBox="0 0 6 6" className="size-[6px]"><path d="M3 0v6M0 3h6" stroke="#fff" strokeWidth="1.500" /></svg></button>
          </div>
        </main>

        <aside className="flex w-[137px] shrink-0 pl-[2px]">
          <div className="flex min-w-0 flex-1 flex-col rounded-tl-sm bg-[#303030]">
            <div className="flex h-[14px] items-center pl-[3px] text-[#9a9a9a]"><h2>Layers</h2></div>
            <div className="grid w-[117px] grid-cols-8 gap-y-[2px] pt-[3px]">
              {layerActions.map((t) => (
                <button key={t.name} type="button" aria-label={t.name} title={t.name} className="flex justify-center"><Icon className="size-[13px]">{t.art}</Icon></button>
              ))}
            </div>
            <label className="mt-1 mr-[2px] flex h-4 items-center gap-1 rounded-full border border-[#8a8a8a] bg-[#555555] pl-1">
              <svg viewBox="0 0 10 10" className="size-2 shrink-0" fill="none" stroke="#999" aria-hidden="true"><circle cx="4" cy="4" r="3" /><path d="M6.500 6.500L9.500 9.500" /></svg>
              <input aria-label="Search layers" placeholder="Search" className="w-full min-w-0 bg-transparent outline-none placeholder:text-[#8f8f8f]" />
            </label>
            <div className="mt-[5px] mr-[2px] flex flex-1 flex-col bg-[#202020]">
              <table className="h-[274px] w-full table-fixed border-collapse text-left leading-[10px]">
                <colgroup>
                  <col /><col className="w-[14px]" /><col className="w-[13px]" /><col className="w-[14px]" /><col className="w-[13px]" /><col className="w-[11px]" />
                </colgroup>
                <thead>
                  <tr className="h-[16px] text-[#e4e4e4]">
                    <th className="border-r border-b border-[#3a3a3a] p-0 pl-[3px] font-normal">Layer</th>
                    <th className="border-r border-b border-[#3a3a3a] p-0" />
                    <th className="border-r border-b border-[#3a3a3a] p-0" />
                    <th className="border-r border-b border-[#3a3a3a] p-0" />
                    <th className="border-r border-b border-[#3a3a3a] p-0" />
                    <th className="border-b border-[#3a3a3a] p-0 pl-[2px] font-normal">M</th>
                  </tr>
                </thead>
                <tbody>
                  {layers.map((l) => <LayerRow key={l.name} layer={l} />)}
                </tbody>
              </table>
              <div className="flex flex-1 items-end pb-[2px] pl-[5px]"><div className="h-[5px] w-[31px] rounded-full bg-[#8a8a8a]" /></div>
            </div>
          </div>
          <div className="flex w-[15px] flex-col items-center bg-[#444444]">
            <div className="flex w-full flex-col items-center gap-2 bg-[#303030] pt-[2px] pb-[6px]">
              <button type="button" aria-label="Panel options"><Gear className="size-[9px]" /></button>
              <button type="button" aria-label="Layers panel"><Icon className="size-[13px]">{panelTabs[0].art}</Icon></button>
            </div>
            <div className="flex flex-col gap-[11px] pt-1">
              {panelTabs.slice(1).map((t) => <button key={t.name} type="button" aria-label={t.name}><Icon className="size-[13px]">{t.art}</Icon></button>)}
            </div>
          </div>
        </aside>
      </div>

      <footer>
        <div className="flex h-[15px] items-center bg-[#303030] pr-[5px] pl-1 text-[#c4c4c4]">
          <div className="flex w-[379px] items-center whitespace-nowrap">
            <button type="button" aria-label="Toggle left sidebar" className="w-6"><svg viewBox="0 0 10 10" className="size-[10px]"><path d="M.5.5h9v9h-9z" fill="#222" stroke="#999" /><path d="M1 1h3v8H1z" fill="#999" /></svg></button>
            <span className="w-14">CPlane</span>
            <span className="w-[111px]">X -23.211 Y -7.953 Z 0</span>
            <span className="w-14">Millimeters</span>
            <span className="mr-1 size-[10px] border border-[#777] bg-[#3cb878]" />
            <span>Metal 02</span>
          </div>
          <div className="flex flex-1 items-center">
            <button type="button" className="w-12 text-left text-[#b4b4b4]">Grid Snap</button>
            <button type="button" className="w-7 text-left text-[#b4b4b4]">Ortho</button>
            <div className="flex flex-1 items-center gap-[3px]">
              <StatusToggle on>Planar</StatusToggle>
              <StatusToggle on>Osnap</StatusToggle>
              <StatusToggle>SmartTrack</StatusToggle>
              <StatusToggle on>Gumball (CPlane)</StatusToggle>
              <svg viewBox="0 0 6 8" className="ml-1 h-2 w-[6px]" aria-hidden="true"><path d="M0 3.500h6V8H0z" fill="#ddd" /><path d="M1.300 4V2.200a1.700 1.700 0 0 1 3.400 0V4" fill="none" stroke="#ddd" /></svg>
              <StatusToggle>Auto CPlane (Object)</StatusToggle>
              <StatusToggle on>Record History</StatusToggle>
              <StatusToggle on>Filter</StatusToggle>
              <StatusToggle>Memory use: 862 MB</StatusToggle>
            </div>
            <button type="button" aria-label="Toggle right sidebar"><svg viewBox="0 0 10 10" className="size-[10px]"><path d="M.5.5h9v9h-9z" fill="#222" stroke="#999" /><path d="M5 1h3v8H5z" fill="#999" /></svg></button>
          </div>
        </div>

        <div className="flex h-[27px] items-center bg-linear-[90deg,#1b2a30_0%,#1b2733_24%,#2b332b_33%,#3b3a30_42%,#38353a_50%,#1f3138_55%,#33283a_62%,#40203f_69%,#2c2430_75%,#222327_90%]">
          <button type="button" aria-label="Start" className="flex w-8 justify-center"><svg viewBox="0 0 12 12" className="size-[11px]"><path d="M0 1.700l5.300-.8v4.700H0zM6 .8L12 0v5.600H6zM0 6.400h5.300v4.700L0 10.300zM6 6.400h6V12l-6-.8z" fill="#fff" /></svg></button>
          <label className="relative flex h-full w-48 items-center gap-2 overflow-hidden bg-[#f2f2f2] pl-2">
            <svg viewBox="0 0 12 12" className="size-[11px] shrink-0" fill="none" stroke="#222" aria-hidden="true"><circle cx="7.500" cy="4.500" r="3.800" /><path d="M4.700 7.300L.8 11.200" strokeWidth="1.200" /></svg>
            <input aria-label="Search Windows" placeholder="Type here to search" className="min-w-0 flex-1 bg-transparent text-[10px] outline-none placeholder:text-[#333]" />
            <svg viewBox="0 0 52 27" className="h-[27px] w-[52px] shrink-0" aria-hidden="true">
              <path d="M0 27C6 18 14 19 24 18s22-2 28 6v3z" fill="#e2b384" />
              <path d="M8 12l8-2 8 1 2 8-9 2-8-1z" fill="#4e9e5b" />
              <path d="M9 11l7-2 1 9-7 2zM17 9l7 1 1 8-8 1z" fill="#fbf7ec" />
              <path d="M18 14l7-9 3 2-7 9-4 1z" fill="#f3a33c" />
              <path d="M25 5l1-2 3 2-1 2z" fill="#e3576b" />
              <path d="M32 10c0-9 13-9 13 0v10H32z" fill="#1e8cf0" />
              <path d="M34 15h9v5h-9z" fill="#0b5cc0" />
              <path d="M36 4c0-4 5-4 5 0" fill="none" stroke="#0b5cc0" strokeWidth="1.500" />
              <path d="M35 9h7" stroke="#8cc8ff" />
            </svg>
          </label>
          <div className="flex h-full">
            {pinned.map((p, i) => (
              <button key={p.name} type="button" aria-label={p.name} className={`relative flex h-full items-center justify-center ${i === 0 ? "w-[34px]" : "w-[33px]"}`}>
                {p.art}
                {p.open && <span className="absolute inset-x-[3px] bottom-0 h-[2px] bg-[#7cc9ea]" />}
              </button>
            ))}
          </div>
          <div className="flex flex-1 items-center justify-end text-[9px] text-[#f2f2f2]">
            <button type="button" className="mr-[14px] flex items-center gap-[5px] font-['Open_Sans',sans-serif] whitespace-nowrap">
              <svg viewBox="0 0 18 18" className="size-[17px]" aria-hidden="true"><circle cx="8" cy="9" r="6.500" fill="#f59d1e" /><path d="M2 10h12M1 13h12M4 16h9" stroke="#ffd27a" strokeWidth="1.800" /><circle cx="12.500" cy="5" r="4.500" fill="#d6302b" /><path d="M12 3.500l1-.7v4.600" fill="none" stroke="#fff" /></svg>
              <span>73°F</span>
              <span>Haze</span>
            </button>
            <div className="flex">
              {tray.map((t) => (
                <button key={t.name} type="button" aria-label={t.name} className="flex w-4 justify-center"><Icon className="size-3">{t.art}</Icon></button>
              ))}
            </div>
            <div className="w-[50px] text-center text-[8px] leading-3 whitespace-nowrap">
              <div>12:21 PM</div>
              <div>11/6/2023</div>
            </div>
            <button type="button" aria-label="Notifications" className="mr-4 ml-[5px]"><svg viewBox="0 0 14 14" className="size-[13px]"><path d="M1 1h12v9H8l-3 3v-3H1z" fill="#eee" /><path d="M3 3.500h8M3 5.500h8M3 7.500h5" stroke="#333" strokeWidth=".8" /><circle cx="11" cy="10.500" r="3" fill="#333" stroke="#ddd" strokeWidth=".7" /></svg></button>
          </div>
        </div>
      </footer>
    </div>
  );
}
